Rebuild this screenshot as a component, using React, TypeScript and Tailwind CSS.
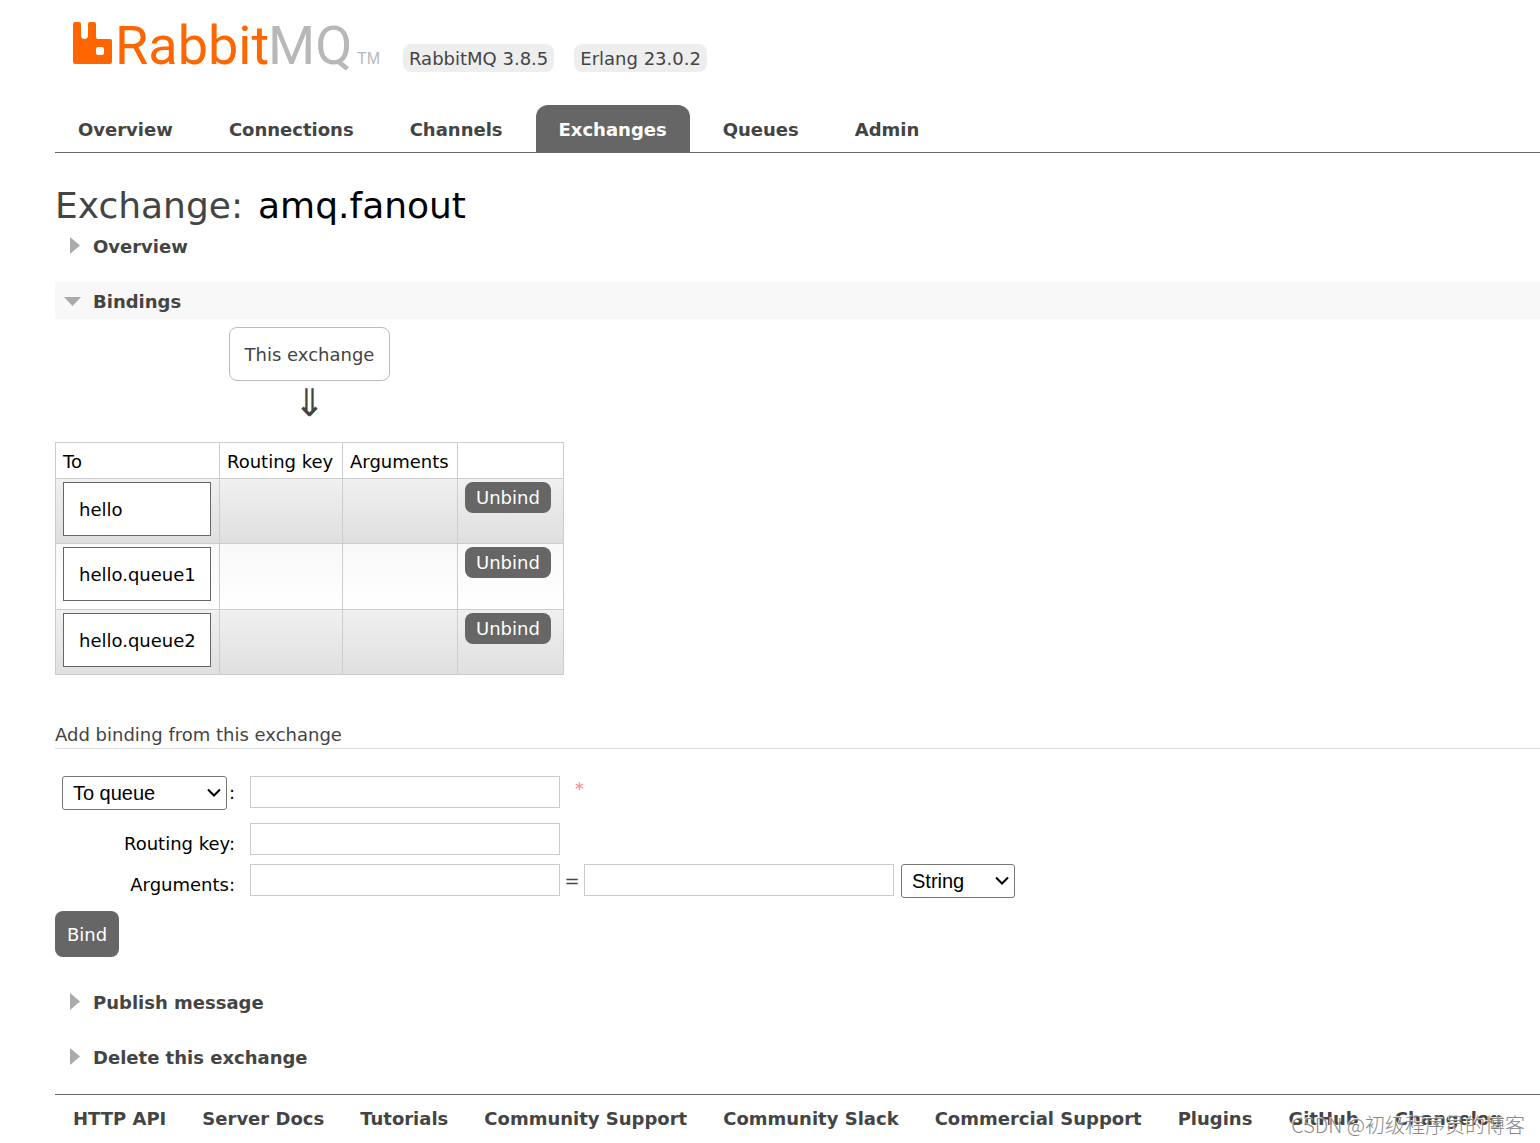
import { useState } from "react";
import type { ReactNode } from "react";

const tabs = ["Overview", "Connections", "Channels", "Exchanges", "Queues", "Admin"];

const bindings = ["hello", "hello.queue1", "hello.queue2"];

const footerLinks = [
  "HTTP API",
  "Server Docs",
  "Tutorials",
  "Community Support",
  "Community Slack",
  "Commercial Support",
  "Plugins",
  "GitHub",
  "Changelog",
];

const Logo = () => (
  <svg width="312" height="64" viewBox="0 0 312 64" role="img" aria-label="RabbitMQ">
    <path
      fill="#ff6600"
      fillRule="evenodd"
      d="M2 10h4q2 0 2 2v11q0 4 3.500 4t3.500-4V12q0-2 2-2h4q2 0 2 2v13q0 2 2 2h12q2 0 2 2v21q0 2-2 2H2q-2 0-2-2V12q0-2 2-2zM25 35q-2 0-2 2v4q0 2 2 2h4q2 0 2-2v-4q0-2-2-2z"
    />
    <text x="42" y="52" fontSize="54" fill="#ff6600" fontFamily="Roboto, sans-serif">
      Rabbit
    </text>
    <text x="195" y="52" fontSize="54" fill="#b8b8b8" fontFamily="Roboto, sans-serif">
      MQ
    </text>
    <text x="284" y="52" fontSize="16" fill="#b8b8b8" fontFamily="'Liberation Sans', sans-serif">
      TM
    </text>
  </svg>
);

const Section = ({ title, open, children }: { title: string; open?: boolean; children?: ReactNode }) => {
  const [visible, setVisible] = useState(!!open);

  return (
    <section>
      <h2 className={visible ? "bg-[#f8f8f8]" : ""}>
        <button
          type="button"
          aria-expanded={visible}
          onClick={() => setVisible(!visible)}
          className="flex h-[37px] w-full items-center gap-3 pl-2 text-left font-bold"
        >
          <svg width="18" height="18" viewBox="0 0 18 18" fill="#aaa" aria-hidden="true">
            {visible ? <path d="M1 5h17l-8.500 9z" /> : <path d="M7 0v17l10-8.500z" />}
          </svg>
          <span className="pt-0.5">{title}</span>
        </button>
      </h2>
      {visible && children}
    </section>
  );
};

const SelectBox = ({ label, options, width }: { label: string; options: string[]; width: string }) => (
  <div className={`relative ${width}`}>
    <select
      aria-label={label}
      className="h-[34px] w-full appearance-none rounded-[3px] border border-[#767676] bg-white pl-2.5 font-['Liberation_Sans',sans-serif] text-[20px] leading-6 text-black"
    >
      {options.map((o) => (
        <option key={o}>{o}</option>
      ))}
    </select>
    <svg
      className="pointer-events-none absolute right-1.5 top-3"
      width="14"
      height="10"
      viewBox="0 0 14 10"
      fill="none"
      stroke="#000"
      strokeWidth="2"
      aria-hidden="true"
    >
      <path d="M1 1.500l6 6 6-6" />
    </svg>
  </div>
);

const inputClass = "h-8 w-[310px] border border-[#ccc] bg-white px-1 text-black";
const thClass = "border border-[#ccc] px-[7px] pt-0.5 text-left font-normal whitespace-nowrap";

const App = () => {
  return (
    <div className="relative overflow-hidden bg-white font-['DejaVu_Sans',Verdana,sans-serif] text-[18px] leading-[22px] text-[#444]">
      <header className="pl-[55px]">
        <div className="flex h-[105px] items-start pl-[18px] pt-3">
          <Logo />
          <span className="ml-[18px] mt-8 rounded-lg bg-[#eee] px-1.5 pb-0.5 pt-1">RabbitMQ 3.8.5</span>
          <span className="ml-5 mt-8 rounded-lg bg-[#eee] px-1.5 pb-0.5 pt-1">Erlang 23.0.2</span>
        </div>
        <nav className="flex gap-2.5 border-b border-[#666]">
          {tabs.map((tab) => (
            <a
              key={tab}
              href="#"
              className={
                tab === "Exchanges"
                  ? "h-[47px] rounded-t-xl bg-[#666] px-[23px] pt-3.5 font-bold text-white"
                  : "h-[47px] px-[23px] pt-3.5 font-bold"
              }
            >
              {tab}
            </a>
          ))}
        </nav>
      </header>

      <main className="pl-[55px] pt-[30px]">
        <h1 className="flex gap-[15px] pt-px text-[36px] leading-[43px]">
          <span>Exchange:</span>
          <span className="text-black">amq.fanout</span>
        </h1>

        <div className="flex flex-col gap-[18px]">
          <Section title="Overview" />

          <Section title="Bindings" open>
            <div className="flex w-[509px] flex-col items-center pt-2">
              <span className="rounded-lg border border-[#bbb] px-[15px] pb-3.5 pt-4">This exchange</span>
              <span className="h-[61px] pt-0.5 text-[38px] leading-10">⇓</span>
              <table className="w-full table-fixed border-collapse text-black">
                <thead>
                  <tr className="h-9">
                    <th className={`w-[164px] ${thClass}`}>To</th>
                    <th className={`w-[123px] ${thClass}`}>Routing key</th>
                    <th className={`w-[115px] ${thClass}`}>Arguments</th>
                    <th className={thClass}></th>
                  </tr>
                </thead>
                <tbody>
                  {bindings.map((queue, i) => (
                    <tr
                      key={queue}
                      className={
                        i % 2 === 0
                          ? "h-[65px] bg-linear-to-b from-[#f0f0f0] to-[#dfdfdf]"
                          : "h-[66px] bg-linear-to-b from-[#f8f8f8] to-white"
                      }
                    >
                      <td className="border border-[#ccc] pl-[7px] pr-2 align-top">
                        <a
                          href="#"
                          className="mt-[3px] block whitespace-nowrap border border-[#666] bg-white pb-3.5 pl-[15px] pt-4"
                        >
                          {queue}
                        </a>
                      </td>
                      <td className="border border-[#ccc]"></td>
                      <td className="border border-[#ccc]"></td>
                      <td className="border border-[#ccc] px-[7px] align-top">
                        <button type="button" className="mt-[3px] h-[31px] rounded-lg bg-[#666] px-[11px] text-white">
                          Unbind
                        </button>
                      </td>
                    </tr>
                  ))}
                </tbody>
              </table>
            </div>

            <h3 className="mt-[49px] border-b border-[#ddd] pb-0.5">Add binding from this exchange</h3>
            <form className="mt-[27px]" onSubmit={(e) => e.preventDefault()}>
              <div className="flex gap-[15px]">
                <div className="flex w-[180px] items-center justify-end gap-0.5 text-black">
                  <SelectBox label="Destination type" options={["To queue", "To exchange"]} width="w-[165px]" />:
                </div>
                <input type="text" aria-label="Destination" required className={inputClass} />
                <span className="pt-0.5 text-[#f88]">*</span>
              </div>
              <div className="mt-[13px] flex gap-[15px]">
                <label htmlFor="routing-key" className="w-[180px] pt-2.5 text-right text-black">
                  Routing key:
                </label>
                <input id="routing-key" type="text" className={inputClass} />
              </div>
              <div className="mt-[9px] flex">
                <label htmlFor="argument-key" className="mr-[15px] w-[180px] pt-2.5 text-right text-black">
                  Arguments:
                </label>
                <input id="argument-key" type="text" className={inputClass} />
                <span className="w-6 pt-1.5 text-center">=</span>
                <input type="text" aria-label="Argument value" className={inputClass} />
                <div className="ml-[7px]">
                  <SelectBox
                    label="Argument type"
                    options={["String", "Number", "Boolean", "List"]}
                    width="w-[114px]"
                  />
                </div>
              </div>
              <button type="submit" className="mt-[13px] block h-[46px] rounded-lg bg-[#666] px-3 pt-0.5 text-white">
                Bind
              </button>
            </form>
          </Section>

          <div className="mt-2">
            <Section title="Publish message" />
          </div>
          <Section title="Delete this exchange" />
        </div>
      </main>

      <footer className="ml-[55px] mt-[19px] flex gap-9 whitespace-nowrap border-t border-[#666] pb-3.5 pl-[18px] pt-[13px] font-bold">
        {footerLinks.map((link) => (
          <a key={link} href="#">
            {link}
          </a>
        ))}
      </footer>

      <p className="absolute bottom-2 right-[15px] whitespace-nowrap font-['Noto_Sans_CJK_SC',sans-serif] text-[20px] font-light text-[#888] [text-shadow:-1px_-1px_0_#fffc]">
        CSDN @初级程序员的博客
      </p>
    </div>
  );
};

export default App;
